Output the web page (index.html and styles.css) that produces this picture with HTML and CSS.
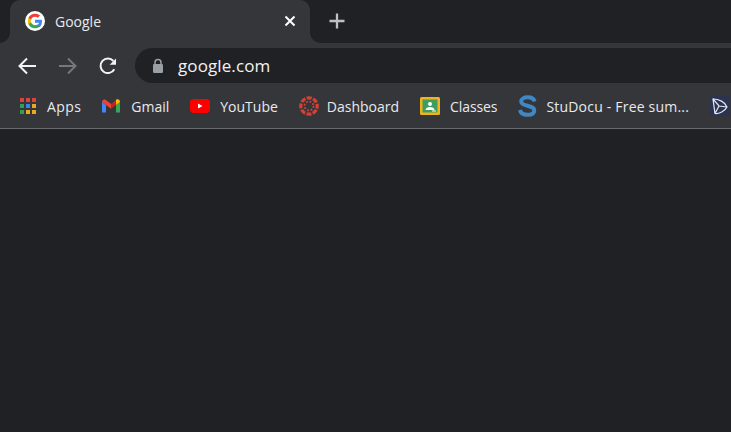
FILE: index.html
```html
<!DOCTYPE html>
<html lang="en">

<head>
  <meta charset="UTF-8" />
  <title>Google</title>
  <meta name="viewport" content="width=device-width, initial-scale=1.0" />
  <link rel="stylesheet" href="styles.css">
</head>

<body>

  <div class="tabstrip">
    <div class="tab">
      <svg class="favicon" width="20" height="20" viewBox="0 0 20 20">
        <circle cx="10" cy="10" r="10" fill="#fff" />
        <g transform="translate(-2 -2) scale(1.2)">
          <path d="M15.800 10.200c0-.5 0-.9-.1-1.300H10v2.500h3.300c-.1.800-.6 1.500-1.300 1.900v1.600h2.100c1.200-1.100 1.700-2.800 1.700-4.700z" fill="#4285f4" />
          <path d="M10 16c1.600 0 3-.5 4.100-1.500L12 12.900c-.5.400-1.200.6-2 .6-1.500 0-2.800-1-3.300-2.400H4.600v1.600C5.600 14.700 7.700 16 10 16z" fill="#34a853" />
          <path d="M6.700 11.100c-.3-.7-.3-1.500 0-2.200V7.300H4.600c-.8 1.700-.8 3.700 0 5.400z" fill="#fbbc05" />
          <path d="M10 6.400c.9 0 1.700.3 2.300.9L14.200 5.500C13.100 4.500 11.600 4 10 4 7.700 4 5.600 5.300 4.600 7.300l2.100 1.600C7.200 7.500 8.500 6.400 10 6.400z" fill="#ea4335" />
        </g>
      </svg>
      <span class="tab-title">Google</span>
      <svg class="tab-close" width="12" height="12" viewBox="0 0 12 12">
        <path d="M1.500 1.500l9 9M10.500 1.500l-9 9" stroke="#fff" stroke-width="2" />
      </svg>
    </div>
    <svg class="new-tab" width="16" height="16" viewBox="0 0 16 16">
      <path d="M8 .5v15M.5 8h15" stroke="#bdc1c6" stroke-width="2.300" />
    </svg>
  </div>

  <div class="toolbar">
    <div class="nav-buttons">
      <svg width="20" height="20" viewBox="0 0 20 20">
        <path d="M19 10H3M10 2.500L2.500 10l7.500 7.500" fill="none" stroke="#f1f3f4" stroke-width="2" />
      </svg>
      <svg width="20" height="20" viewBox="0 0 20 20">
        <path d="M2 10h16M11 2.500l7.500 7.500-7.500 7.500" fill="none" stroke="#75777a" stroke-width="2" />
      </svg>
      <svg width="20" height="20" viewBox="0 0 20 20">
        <g transform="translate(1 0)">
          <path d="M16.300 13.200A7.300 7.300 0 1 1 15.400 5" fill="none" stroke="#f1f3f4" stroke-width="2" />
          <path d="M18 2.500v6.300h-6.300z" fill="#f1f3f4" />
        </g>
      </svg>
    </div>
    <div class="omnibox">
      <svg class="lock" width="12" height="16" viewBox="0 0 12 16">
        <path d="M3 7V4.500a3 3 0 0 1 6 0V7" fill="none" stroke="#9aa0a6" stroke-width="1.500" />
        <rect x="1" y="6" width="10" height="9" rx="1.200" fill="#9aa0a6" />
      </svg>
      <span class="url">google.com</span>
    </div>
  </div>

  <div class="bookmarks">
    <a class="bookmark bookmark-apps">
      <svg width="18" height="18" viewBox="0 0 18 18">
        <rect x="1" y="1" width="4" height="4" fill="#d9453d" />
        <rect x="7" y="1" width="4" height="4" fill="#d9453d" />
        <rect x="13" y="1" width="4" height="4" fill="#d9453d" />
        <rect x="1" y="7" width="4" height="4" fill="#2f9e57" />
        <rect x="7" y="7" width="4" height="4" fill="#3b82e6" />
        <rect x="13" y="7" width="4" height="4" fill="#e9a820" />
        <rect x="1" y="13" width="4" height="4" fill="#2f9e57" />
        <rect x="7" y="13" width="4" height="4" fill="#e9a820" />
        <rect x="13" y="13" width="4" height="4" fill="#e9a820" />
      </svg>
      <span>Apps</span>
    </a>
    <a class="bookmark">
      <svg width="20" height="20" viewBox="0 0 20 20">
        <path d="M1 6v10.500h4V9z" fill="#4285f4" />
        <path d="M15 9v7.500h4V6z" fill="#34a853" />
        <path d="M1 6l4 3 5 3.700V8L4.500 3.800C3 2.800 1 3.800 1 6z" fill="#ea4335" />
        <path d="M10 8l5-4.200v5.200l-5 3.700z" fill="#c5221f" />
        <path d="M15 3.800l.5-.2c1.500-1 3.500 0 3.500 2.400l-4 3z" fill="#fbbc04" />
      </svg>
      <span>Gmail</span>
    </a>
    <a class="bookmark">
      <svg width="20" height="20" viewBox="0 0 20 20">
        <rect y="3" width="20" height="14" rx="4" fill="#f00" />
        <path d="M8 7.500v5l4.500-2.500z" fill="#fff" />
      </svg>
      <span>YouTube</span>
    </a>
    <a class="bookmark bookmark-dash">
      <svg width="20" height="20" viewBox="0 0 20 20">
        <circle cx="10" cy="10" r="8.200" fill="none" stroke="#d64035" stroke-width="3.200" stroke-dasharray="5 1.440" stroke-dashoffset="2.500" />
        <circle cx="10" cy="10" r="4.500" fill="none" stroke="#d64035" stroke-width="1.800" stroke-dasharray="1.800 1.730" />
      </svg>
      <span>Dashboard</span>
    </a>
    <a class="bookmark bookmark-classes">
      <svg width="20" height="20" viewBox="0 0 20 20">
        <rect y="1" width="20" height="18" rx="1.500" fill="#f0b41c" />
        <rect x="2.500" y="3.500" width="15" height="13" fill="#3f9e5f" />
        <circle cx="10" cy="8" r="2" fill="#fff" />
        <path d="M5.500 14c0-4 9-4 9 0z" fill="#fff" />
        <rect x="12" y="14.500" width="4" height="1" fill="#fff" />
      </svg>
      <span>Classes</span>
    </a>
    <a class="bookmark bookmark-studocu">
      <svg width="19" height="22" viewBox="0 0 19 22">
        <path d="M16.500 6.500C15.800 3.200 13 2.300 9.800 2.300 6 2.300 3.200 3.800 3.200 6.500c0 5.500 13 3 13 9 0 3-3 4.300-6.700 4.300-3.800 0-6.800-1.300-7.500-4.800" fill="none" stroke="#3f88c5" stroke-width="4" />
      </svg>
      <span>StuDocu - Free sum...</span>
    </a>
    <a class="bookmark">
      <svg width="20" height="20" viewBox="0 0 20 20">
        <rect width="20" height="20" rx="3" fill="#2a3350" />
        <path d="M3 3c6 0 12 3 14 8-2 4-8 7-12 6.500zM3 3l6 7 8 1M9 10l-4 7.500" fill="none" stroke="#e4e6f0" stroke-width="1.200" />
      </svg>
    </a>
  </div>

  <div class="content"></div>

</body>

</html>
```

FILE: styles.css
```css
* {
  margin: 0;
  padding: 0;
  box-sizing: border-box;
  font-family: 'Open Sans', 'Noto Sans', sans-serif;
}

body {
  background: #202124;
  color: #e8eaed;
  height: 432px;
  overflow: hidden;
}

.tabstrip {
  height: 43px;
  padding-left: 10px;
  display: flex;
  align-items: center;
  background: #202124;
}

.tab {
  position: relative;
  width: 300px;
  height: 43px;
  padding: 0 14px 1px 15px;
  display: flex;
  align-items: center;
  background: #35363a;
  border-radius: 10px 10px 0 0;
}

/* little flares at the foot of the active tab */
.tab::before,
.tab::after {
  content: "";
  position: absolute;
  bottom: 0;
  width: 10px;
  height: 10px;
  background: radial-gradient(circle at var(--corner), transparent 9.500px, #35363a 10px);
}

.tab::before {
  --corner: 0 0;
  left: -10px;
}

.tab::after {
  --corner: 100% 0;
  right: -10px;
}

.favicon {
  flex-shrink: 0;
}

.tab-title {
  margin-left: 10px;
  flex: 1;
  font-size: 14px;
  color: #e8eaed;
}

.new-tab {
  margin: 0 0 1px 19px;
}

.toolbar {
  height: 45px;
  padding: 5px 0 5px 17px;
  display: flex;
  align-items: center;
  background: #35363a;
}

.nav-buttons {
  display: flex;
  gap: 20px;
  width: 118px;
}

.omnibox {
  flex: 1;
  height: 35px;
  padding-left: 17px;
  display: flex;
  align-items: center;
  background: #202124;
  border-radius: 18px 0 0 18px;
}

.url {
  margin-left: 14px;
  font-size: 17px;
  letter-spacing: 0.1px;
  color: #f1f3f4;
}

.bookmarks {
  height: 41px;
  padding: 0 0 4px 19px;
  display: flex;
  align-items: center;
  gap: 21px;
  background: #35363a;
  border-bottom: 1px solid #6a6b6e;
  overflow: hidden;
}

.bookmark {
  display: flex;
  align-items: center;
  gap: 10px;
  flex-shrink: 0;
  font-size: 14px;
  color: #e8eaed;
}

.bookmark-apps span {
  letter-spacing: 0.4px;
}

.bookmark-apps {
  margin-right: -1px;
}

.bookmark-dash {
  gap: 8px;
}

.bookmark-classes span {
  letter-spacing: -0.1px;
}

.bookmark-studocu {
  gap: 9px;
}

.bookmark-studocu span {
  letter-spacing: 0.2px;
}

.content {
  height: 304px;
  background: #202124;
}
```
